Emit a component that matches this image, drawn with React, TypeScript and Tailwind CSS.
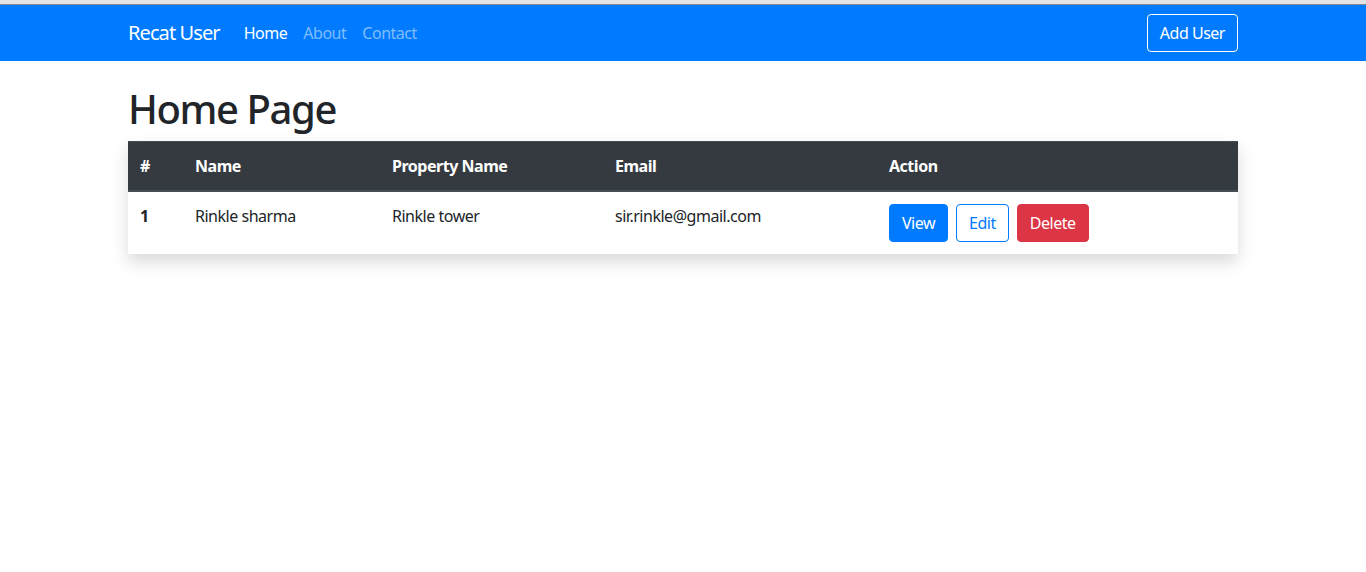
import React from "react";

export default function App() {
  const font = { fontFamily: '"Segoe UI", "Noto Sans", "Open Sans", sans-serif' };
  return (
    <div className="min-h-[572px] bg-white text-[#212529] text-base tracking-[-0.03em]" style={font}>
      <div className="h-[4px] bg-[#e3e3e3]" />
      <div className="h-px bg-[#8a8a8a]" />
      <nav className="bg-[#007bff] h-[56px] flex items-center">
        <div className="w-[1110px] mx-auto flex items-center">
          <a className="text-white text-[20px] leading-[30px] mr-4 tracking-[-0.045em]">Recat User</a>
          <a className="text-white px-2 leading-6">Home</a>
          <a className="text-[#80bdff] px-2 leading-6">About</a>
          <a className="text-[#80bdff] px-2 leading-6">Contact</a>
          <button className="ml-auto border border-white rounded text-white h-[38px] px-3 leading-6">
            Add User
          </button>
        </div>
      </nav>
      <div className="w-[1110px] mx-auto pt-6">
        <h1 className="text-[40px] leading-[48px] font-medium mb-2 tracking-[-0.035em]">Home Page</h1>
        <table className="w-full border-collapse shadow-[0_8px_16px_rgba(0,0,0,0.15)]">
          <thead>
            <tr className="bg-[#343a40] text-white text-left">
              <th className="w-[55px] px-3 pt-3 pb-3 border-t border-[#454d55] border-b-2 leading-6 font-bold">#</th>
              <th className="w-[197px] px-3 py-3 border-t border-[#454d55] border-b-2 leading-6 font-bold">Name</th>
              <th className="w-[223px] px-3 py-3 border-t border-[#454d55] border-b-2 leading-6 font-bold">Property Name</th>
              <th className="w-[274px] px-3 py-3 border-t border-[#454d55] border-b-2 leading-6 font-bold">Email</th>
              <th className="px-3 py-3 border-t border-[#454d55] border-b-2 leading-6 font-bold">Action</th>
            </tr>
          </thead>
          <tbody>
            <tr className="align-top">
              <td className="px-3 py-3 leading-6 font-bold">1</td>
              <td className="px-3 py-3 leading-6">Rinkle sharma</td>
              <td className="px-3 py-3 leading-6">Rinkle tower</td>
              <td className="px-3 py-3 leading-6">sir.rinkle@gmail.com</td>
              <td className="px-3 py-3 leading-6">
                <div className="flex gap-2">
                  <button className="bg-[#007bff] border border-[#007bff] text-white rounded h-[38px] px-3">View</button>
                  <button className="border border-[#007bff] text-[#007bff] rounded h-[38px] px-3">Edit</button>
                  <button className="bg-[#dc3545] border border-[#dc3545] text-white rounded h-[38px] px-3">Delete</button>
                </div>
              </td>
            </tr>
          </tbody>
        </table>
      </div>
    </div>
  );
}
